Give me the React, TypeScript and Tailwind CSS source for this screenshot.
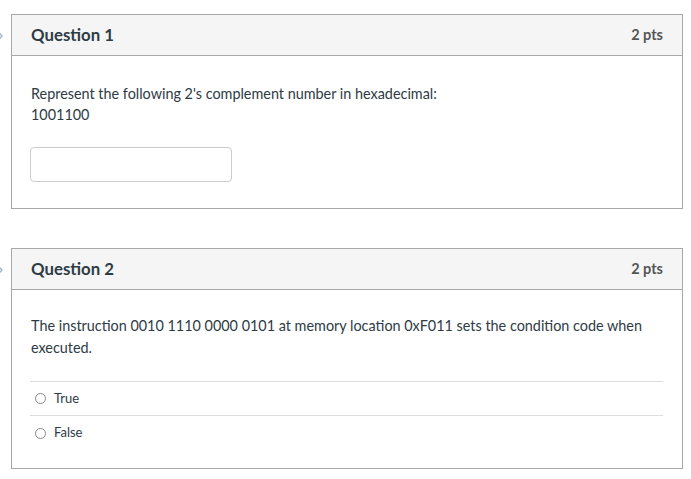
import React from "react";

const font = { fontFamily: "Lato, 'Noto Sans', sans-serif" };

function Chevron() {
  return (
    <svg className="absolute left-[-15px] top-[15px]" width="9" height="12" viewBox="0 0 9 12" fill="none">
      <path d="M1 1.5 L5 6 L1 10.5" stroke="#9fb3c8" strokeWidth="1.4" />
    </svg>
  );
}

function Header({ title }: { title: string }) {
  return (
    <div className="relative flex h-[41px] items-center justify-between border-b border-[#a8a8a8] bg-[#f5f5f5] pl-[19px] pr-[19px]">
      <Chevron />
      <span className="text-[16.8px] font-bold text-[#2d3b45]">{title}</span>
      <span className="text-[14.5px] font-bold text-[#555555]">2 pts</span>
    </div>
  );
}

export default function App() {
  return (
    <div className="min-h-[479px] bg-white pt-[14px] text-[#2d3b45]" style={font}>
      {/* Question 1 */}
      <div className="ml-[11px] w-[672px] border border-[#a8a8a8]">
        <Header title="Question 1" />
        <div className="pl-[19px] pr-[19px] pt-[27px] pb-[26px]">
          <p className="text-[14.4px] leading-[21px]">
            Represent the following 2's complement number in hexadecimal:
          </p>
          <p className="text-[14.4px] leading-[21px]">1001100</p>
          <input
            type="text"
            className="mt-[22px] h-[35px] w-[202px] rounded-[4px] border border-[#cccccc] bg-white outline-none"
            style={{ marginLeft: -1 }}
          />
        </div>
      </div>

      {/* Question 2 */}
      <div className="ml-[11px] mt-[39px] w-[672px] border border-[#a8a8a8]">
        <Header title="Question 2" />
        <div className="pl-[19px] pr-[19px] pt-[25px] pb-[18px]">
          <p className="text-[14.4px] leading-[22px]">
            The instruction 0010 1110 0000 0101 at memory location 0xF011 sets the condition code when executed.
          </p>
          <div className="mt-[22px] border-t border-[#dddddd]" style={{ marginLeft: -1 }}>
            {["True", "False"].map((label, i) => (
              <div
                key={label}
                className={`flex h-[34px] items-center gap-[8px] pl-[5px] ${i === 0 ? "border-b border-[#dddddd]" : ""}`}
              >
                <span className="h-[11px] w-[11px] rounded-full border border-[#888888] bg-white" />
                <span className="text-[13px] text-[#2d3b45]">{label}</span>
              </div>
            ))}
          </div>
        </div>
      </div>
    </div>
  );
}
